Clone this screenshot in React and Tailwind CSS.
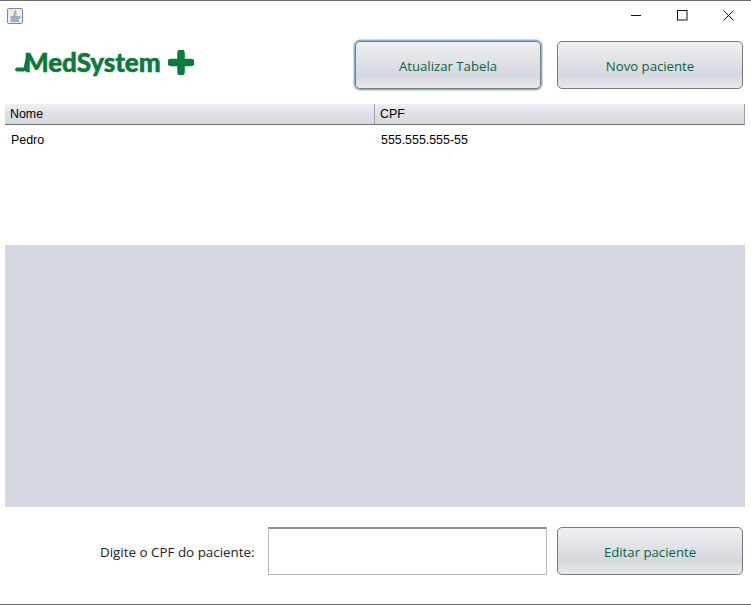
import React from "react";

const btn = "h-[48px] w-[186px] shrink-0 rounded-[5px] border border-[#7a7a7a] bg-[linear-gradient(to_bottom,#eff0f3_0%,#e2e4e8_35%,#d4d7de_72%,#dee0e5_85%,#e8e9ec_100%)] text-[13.2px] text-[#0a6440] pt-[3px] [font-family:'Open_Sans','DejaVu_Sans',sans-serif] flex items-center justify-center";

function JavaIcon() {
  return (
    <svg width="16" height="16" viewBox="0 0 16 16" className="block">
      <rect x="0.5" y="0.5" width="15" height="15" rx="1.5" fill="#e8eef6" stroke="#6f8aa8" />
      <path d="M8.5 2.5c1 1.5-2.2 2.6-1.2 4.6.3.6.8.9.8.9" fill="none" stroke="#e8762c" strokeWidth="1.3" />
      <path d="M10 4.5c-1.2.8-1.6 1.6-.9 3" fill="none" stroke="#e8a23c" strokeWidth="1" />
      <path d="M3.5 9h7.5M4 11h7M3.5 13h8.5" stroke="#44709e" strokeWidth="1" fill="none" />
      <path d="M11.5 8.5c2 0 2 2-.5 2.3" stroke="#44709e" strokeWidth="1" fill="none" />
    </svg>
  );
}

function Logo() {
  return (
    <div className="flex items-center ml-[10px]">
      <svg width="14" height="20" viewBox="0 0 14 20" className="block mt-[1px]">
        <path d="M2 16.5h6.5q1.5 0 2-1.5L13 4" fill="none" stroke="#0b7a3b" strokeWidth="3.8" strokeLinecap="round" strokeLinejoin="round" />
      </svg>
      <span className="text-[26px] leading-none font-black text-[#0b7a3b] tracking-[-0.1px] [-webkit-text-stroke:0.5px_#0b7a3b] [font-family:'Lato',sans-serif] -ml-[5px]">MedSystem</span>
      <svg width="26" height="25" viewBox="0 0 26 25" className="block ml-[8px] mt-[1px]">
        <path d="M13 3v19M3 12.5h20" fill="none" stroke="#0b7a3b" strokeWidth="7.5" strokeLinecap="round" />
      </svg>
    </div>
  );
}

export default function App() {
  return (
    <div className="w-[751px] h-[605px] bg-white flex flex-col overflow-hidden border-t border-[#6a6a6a] [font-family:'Liberation_Sans',sans-serif]">
      <div className="h-[29px] flex items-start justify-between pl-[7px]">
        <div className="pt-[7px]"><JavaIcon /></div>
        <div className="flex items-center pt-[9px] pr-[17px] gap-[35px]">
          <svg width="11" height="11" viewBox="0 0 11 11"><path d="M0 5.5h10" stroke="#111" strokeWidth="1" /></svg>
          <svg width="11" height="11" viewBox="0 0 11 11"><rect x="0.5" y="0.5" width="9.5" height="9.5" fill="none" stroke="#111" /></svg>
          <svg width="11" height="11" viewBox="0 0 11 11"><path d="M0.5 0.5l10 10M10.5 0.5l-10 10" stroke="#111" strokeWidth="1" /></svg>
        </div>
      </div>

      <div className="h-[74px] flex items-start justify-between pt-[11px] pr-[8px] pl-[5px]">
        <div className="h-[48px] flex items-center -translate-y-[3px]"><Logo /></div>
        <div className="flex gap-[16px]">
          <div className={btn + " shadow-[0_0_0_1.5px_#8db4dc] border-[#5f6b7a]"}>Atualizar Tabela</div>
          <div className={btn}>Novo paciente</div>
        </div>
      </div>

      <div className="mx-[5px] w-[740px] text-[12.4px] text-black">
        <div className="h-[21px] flex border-b border-r border-b-[#6f7177] border-r-[#9a9ca3] bg-[linear-gradient(to_bottom,#eef0f3_0%,#dfe1e7_45%,#d7d9e0_100%)]">
          <div className="w-[370px] pl-[5px] flex items-center border-r border-[#a2a4ab]">Nome</div>
          <div className="pl-[5px] flex items-center">CPF</div>
        </div>
        <div className="h-[120px] flex">
          <div className="w-[370px] pl-[6px] pt-[8px] leading-[14px]">Pedro</div>
          <div className="pl-[6px] pt-[8px] leading-[14px]">555.555.555-55</div>
        </div>
      </div>

      <div className="mx-[5px] w-[740px] h-[262px] bg-[#d5d8e0]" />

      <div className="flex items-start pt-[20px] pl-[100px]">
        <div className="w-[155px] h-[48px] pt-[3px] flex items-center whitespace-nowrap text-[13.4px] text-[#222] [font-family:'Open_Sans','DejaVu_Sans',sans-serif]">Digite o CPF do paciente:</div>
        <div className="ml-[13px] w-[279px] h-[48px] bg-white border border-[#b9b9b9] border-t-2 border-t-[#8f8f8f]" />
        <div className={btn + " ml-[10px]"}>Editar paciente</div>
      </div>

      <div className="mt-auto h-[1px] bg-[#6a6a6a]" />
    </div>
  );
}
